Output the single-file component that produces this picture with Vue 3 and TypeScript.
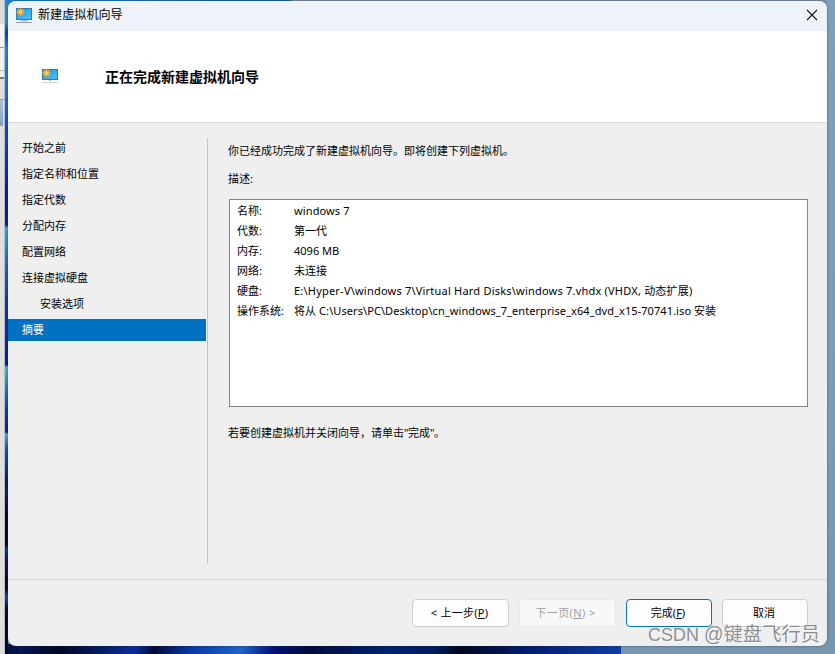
<script setup lang="ts">
interface Step { label: string; nested?: boolean; active?: boolean }
interface Detail { name: string; value: string; kind: string }

const steps: Step[] = [
  { label: '开始之前' },
  { label: '指定名称和位置' },
  { label: '指定代数' },
  { label: '分配内存' },
  { label: '配置网络' },
  { label: '连接虚拟硬盘' },
  { label: '安装选项', nested: true },
  { label: '摘要', active: true },
]

const details: Detail[] = [
  { name: '名称:', value: 'windows 7', kind: 'latin' },
  { name: '代数:', value: '第一代', kind: 'cjk' },
  { name: '内存:', value: '4096 MB', kind: 'cjk' },
  { name: '网络:', value: '未连接', kind: 'cjk' },
  { name: '硬盘:', value: 'E:\\Hyper-V\\windows 7\\Virtual Hard Disks\\windows 7.vhdx (VHDX, 动态扩展)', kind: 'disk' },
  { name: '操作系统:', value: '将从 C:\\Users\\PC\\Desktop\\cn_windows_7_enterprise_x64_dvd_x15-70741.iso 安装', kind: 'iso' },
]
</script>

<template>
  <div class="desktop">
    <div class="behind"><i class="behind-a"></i><i class="behind-b"></i><i class="behind-c"></i><i class="behind-d"></i></div>
    <div class="sliver"></div>
    <main class="dialog">
      <header class="titlebar">
        <svg class="title-icon" width="17" height="17" viewBox="0 0 17 17">
          <defs>
            <linearGradient id="screen" x1="0" y1="0" x2="1" y2="1">
              <stop offset="0" stop-color="#2794dc" /><stop offset="1" stop-color="#4cc2fb" />
            </linearGradient>
          </defs>
          <rect x=".5" y=".5" width="15" height="11" fill="url(#screen)" stroke="#327ba5" />
          <path d="M6 12h4v1H6z" fill="#a7b2bd" /><path d="M4 12.500h8v1H4z" fill="#bcc5ce" />
          <path d="M0 14.5h16" stroke="#8c9eaf" />
          <path d="M4.5 0v8M.5 4h8M1.7 1.2l5.6 5.6M7.3 1.2L1.7 6.8" stroke="#f6b43c" stroke-width="1.3" />
          <circle cx="4.5" cy="4" r="1.5" fill="#ffd37a" />
        </svg>
        <span class="title">新建虚拟机向导</span>
        <svg class="close" width="12" height="12" viewBox="0 0 12 12"><path d="M1 1l10 10M11 1L1 11" stroke="#17191c" stroke-width="1.15" /></svg>
      </header>

      <section class="banner">
        <svg class="banner-icon" width="17" height="15" viewBox="0 0 17 15">
          <rect x=".5" y=".5" width="15" height="10" fill="url(#screen)" stroke="#327ba5" />
          <path d="M7 11h2v1H7z" fill="#b4bdc5" />
          <path d="M0 13.5h16" stroke="#cbd5dc" />
          <path d="M4.5 0v8M.5 4h8M1.7 1.2l5.6 5.6M7.3 1.2L1.7 6.8" stroke="#f6b43c" stroke-width="1.3" />
          <circle cx="4.5" cy="4" r="1.5" fill="#ffd37a" />
        </svg>
        <h1>正在完成新建虚拟机向导</h1>
      </section>

      <div class="body">
        <nav class="steps">
          <div v-for="s in steps" :key="s.label" class="step" :class="{ nested: s.nested, active: s.active }">{{ s.label }}</div>
        </nav>
        <section class="content">
          <p class="intro">你已经成功完成了新建虚拟机向导。即将创建下列虚拟机。</p>
          <p class="caption">描述:</p>
          <div class="box">
            <div v-for="d in details" :key="d.name" class="row">
              <span class="name">{{ d.name }}</span><span :class="d.kind">{{ d.value }}</span>
            </div>
          </div>
          <p class="hint">若要创建虚拟机并关闭向导，请单击<span class="quote">"</span>完成<span class="quote">"</span>。</p>
        </section>
      </div>

      <footer class="footer">
        <button class="wide back">&lt; 上一步(<u>P</u>)</button>
        <button class="wide next" disabled>下一页(<u>N</u>) &gt;</button>
        <button class="finish">完成(<u>F</u>)</button>
        <button class="cancel">取消</button>
      </footer>
    </main>
    <div class="watermark"><span class="brand">CSDN</span><span class="author">@键盘飞行员</span></div>
  </div>
</template>

<style>
body { margin: 0; overflow: hidden; }
</style>

<style scoped>
* { box-sizing: border-box; }
.desktop {
  position: relative;
  display: flex;
  width: 835px;
  height: 654px;
  overflow: hidden;
  font: 11px/20px "Noto Sans", "Noto Sans CJK SC", sans-serif;
  color: #000;
  background:
    linear-gradient(115deg, #020a35 0, #061552 4%, #020720 10%, #0a2d9b 22%, #020a35 25%, #0738a4 31%, #1f64c8 39%, #03127a 44%, #020a3a 50%, #00236e 62%, #001b5c 70%, #020820 74%, #021a6b 84%, #123da5 100%) 0 644px / 621px 10px no-repeat,
    linear-gradient(90deg, #1684dc, #1c5cb8 35%, #0e3b9f 291px, #8093ae 292px, #7593ad) 0 0 / 827px 4px no-repeat,
    linear-gradient(#7c9fbc, #7f9ab4 60%, #7894ae);
}
.behind {
  display: flex;
  flex: none;
  flex-direction: column;
  width: 5px;
  height: 654px;
  background: #dfdfdf;
  border-right: 1px solid #bcbcbc;
}
.behind-a { height: 24px; background: #dcdcdc; }
.behind-b { height: 24px; background: #f5f5f5; border-bottom: 1px solid #989898; }
.behind-c { height: 52px; background: linear-gradient(#f1f1f1 0 22px, #bbb 22px 23px, #eee 23px 29px, #777 29px 31px, #dedede 31px 51px, #999 51px); }
.behind-d { width: 3px; height: 26px; background: linear-gradient(#afc2da, #829fc5); }
.sliver {
  flex: none;
  width: 3px;
  height: 654px;
  background: linear-gradient(#168ce0 0, #248ec8 22px, #0842b7 33px, #2189cf 48px, #1773ce 92px, #0c52c9 125px, #0719a0 195px, #0620a0 225px, #38a8d6 228px, #187bc6 256px, #0b3ba4 300px, #0719a1 365px, #45bcd0 367px, #137bc7 390px, #0741b1 408px, #0719a1 432px, #45b2dc 434px, #0759bb 449px, #041768 484px, #101d6c 489px, #020a38 515px, #01041c 545px, #1236a5 549px, #07175c 560px, #020820 588px, #1646b4 597px, #020a25 609px, #020a38 654px);
}
.dialog {
  display: flex;
  flex: none;
  flex-direction: column;
  width: 819px;
  height: 645px;
  margin-top: 1px;
  overflow: hidden;
  background: #efefef;
  border-radius: 8px;
  box-shadow: 0 0 2px rgba(30, 40, 60, .75);
}
.titlebar {
  display: flex;
  flex: none;
  align-items: flex-start;
  height: 30px;
  padding: 7px 9px 0 8px;
  background: #eef3f9;
}
.title { margin: -3px 0 0 5px; font-size: 12.1px; }
.close { margin: 1px 0 0 auto; }
.banner {
  display: flex;
  flex: none;
  align-items: flex-start;
  height: 92px;
  padding: 38px 34px 0;
  background: #fff;
  border-bottom: 1px solid #dcdcdc;
}
.banner-icon { flex: none; }
h1 {
  margin: -2px 0 0 46px;
  font-size: 14px;
  line-height: 20px;
  font-weight: 700;
}
.body { display: flex; flex: none; height: 456px; padding-top: 15px; }
.steps {
  display: flex;
  flex-direction: column;
  gap: 4px;
  width: 200px;
  height: 426px;
  padding: 0 1px 0 0;
  border-right: 1px solid #c7c7c7;
}
.step { height: 22px; padding-left: 14px; line-height: 22px; }
.step:first-child { margin-top: -1px; }
.step.nested { padding-left: 32px; }
.step.active { color: #fff; background: #0070c0; }
.content { width: 600px; padding: 3px 0 0 20px; }
p { margin: 0; white-space: nowrap; }
.caption { margin-top: 8px; }
.box {
  width: 579px;
  height: 208px;
  margin: 10px 0 0 1px;
  padding: 1px 7px;
  background: #fff;
  border: 1px solid #82848b;
}
.row { display: flex; height: 20px; white-space: nowrap; }
.name { flex: none; width: 57px; }
.latin { letter-spacing: .12px; }
.disk { letter-spacing: .212px; }
.iso { letter-spacing: .077px; }
.hint { margin-top: 16px; }
.quote { display: inline-block; width: 4px; }
.footer {
  display: flex;
  flex: 1;
  align-items: flex-start;
  gap: 10px;
  padding: 19px 19px 0;
  justify-content: flex-end;
  border-top: 1px solid #dcdcdc;
}
button {
  width: 86px;
  height: 28px;
  padding: 0 2px 0 0;
  font: inherit;
  color: #000;
  background: #fdfdfd;
  border: 1px solid #cfcfcf;
  border-radius: 4px;
}
.wide { width: 97px; letter-spacing: .25px; }
.next { padding-right: 4px; color: #a0a0a0; background: #f8f8f8; border-color: #e8e8e8; letter-spacing: .4px; }
.finish { border-color: #0073c9; }
u { text-underline-offset: 1px; }
.watermark {
  position: absolute;
  display: flex;
  top: 622px;
  left: 648px;
  gap: 6px;
  font: 18px/26px "Liberation Sans", "Noto Sans CJK SC", sans-serif;
  color: rgba(112, 116, 122, .8);
  white-space: nowrap;
  text-shadow: 1px 1px 0 rgba(255, 255, 255, .7);
}
.author { font-size: 19.3px; margin-left: -1px; }
</style>
